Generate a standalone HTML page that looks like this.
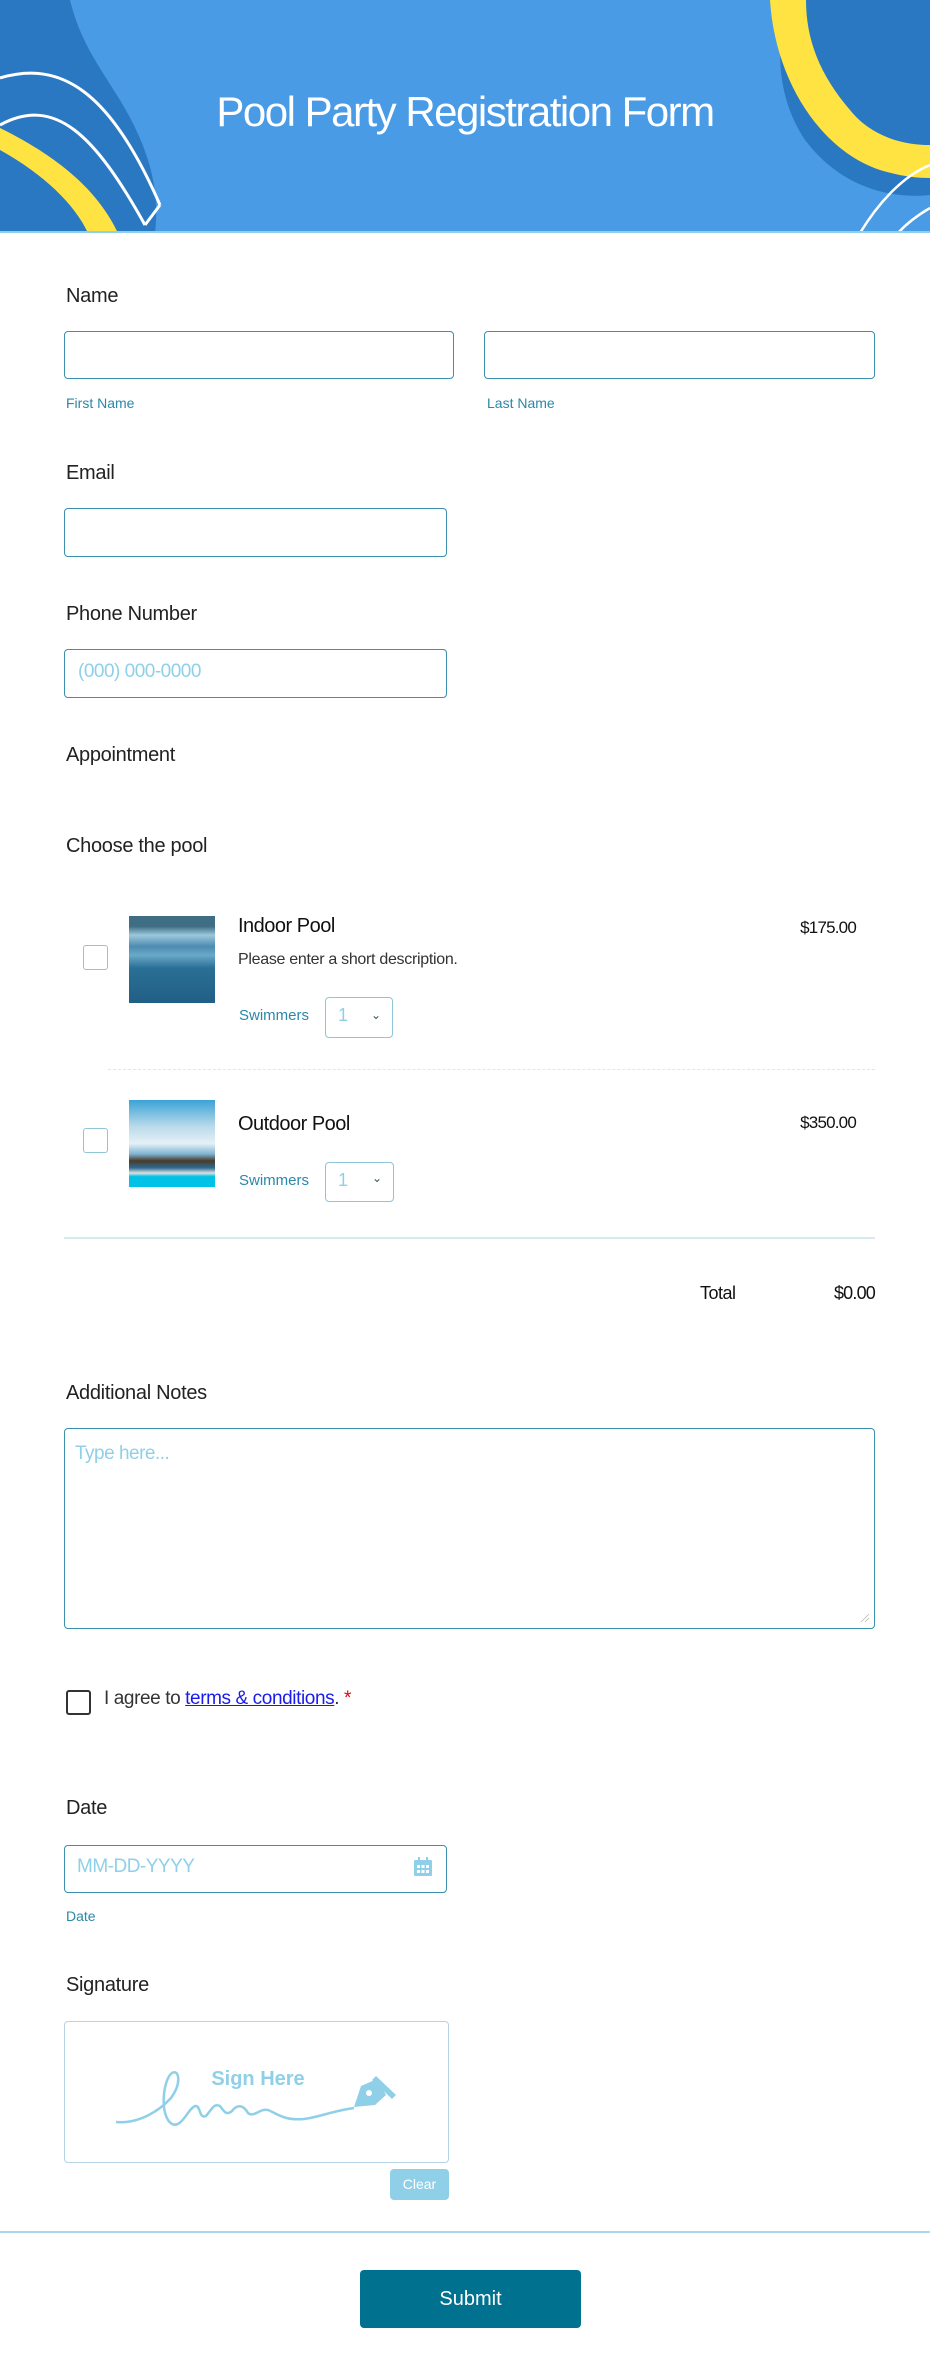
<!DOCTYPE html>
<html><head><meta charset="utf-8"><style>
*{box-sizing:border-box;margin:0;padding:0}
body{width:930px;height:2377px;position:relative;background:#fff;font-family:"Liberation Sans",sans-serif;color:#222;overflow:hidden}
.a{position:absolute}
.lbl{font-size:20px;color:#222;line-height:24px;letter-spacing:-0.3px}
.sub{font-size:14px;color:#2a88a8;line-height:18px}
.inp{border:1px solid #3a90ad;border-radius:4px;background:#fff}
.ph{font-size:19px;color:#8fd0e8;line-height:24px;letter-spacing:-0.5px}
.cb{border:1.5px solid #8ec5d8;border-radius:3px;background:#fff}
.sel{border:1px solid #8ec5d8;border-radius:4px}
.t{font-size:20px;color:#111;letter-spacing:-0.5px}
.pr{font-size:17px;color:#111;text-align:right;width:120px;letter-spacing:-0.8px}
</style></head><body>
<svg class="a" style="left:0;top:0" width="930" height="233" viewBox="0 0 930 233">
<rect width="930" height="233" fill="#4a9be5"/>
<path d="M0 0 H70 C80 40 95 60 120 100 C150 150 160 190 155 233 H0 Z" fill="#2a78c2"/>
<path d="M0 150 C45 175 75 205 88 233 H118 C100 195 65 160 0 128 Z" fill="#ffe342"/>
<path d="M0 78 C60 60 110 90 160 205" fill="none" stroke="#fff" stroke-width="3"/>
<path d="M0 125 C55 95 95 135 145 225" fill="none" stroke="#fff" stroke-width="3"/>
<path d="M145 225 L160 205" stroke="#fff" stroke-width="3"/>
<path d="M790 0 H930 V195 C880 200 835 180 805 140 C775 95 775 40 790 0 Z" fill="#2a78c2"/>
<path d="M770 0 C775 80 820 150 880 170 C900 176 915 178 930 178 V145 C900 145 870 135 850 110 C820 75 806 40 806 0 Z" fill="#ffe342"/>
<path d="M860 233 C880 200 905 175 930 165" fill="none" stroke="#fff" stroke-width="2.5"/>
<path d="M898 233 C908 222 918 215 930 208" fill="none" stroke="#fff" stroke-width="2.5"/>
<rect y="231" width="930" height="2" fill="#8fd0e8"/>
</svg>
<div class="a" style="left:0;width:930px;top:84px;text-align:center;color:#fff;font-size:42px;line-height:56px;letter-spacing:-1.5px">Pool Party Registration Form</div>

<div class="a lbl" style="left:66px;top:284px">Name</div>
<div class="a inp" style="left:64px;top:331px;width:390px;height:48px"></div>
<div class="a inp" style="left:484px;top:331px;width:391px;height:48px"></div>
<div class="a sub" style="left:66px;top:394px">First Name</div>
<div class="a sub" style="left:487px;top:394px">Last Name</div>

<div class="a lbl" style="left:66px;top:461px">Email</div>
<div class="a inp" style="left:64px;top:508px;width:383px;height:49px"></div>

<div class="a lbl" style="left:66px;top:602px">Phone Number</div>
<div class="a inp" style="left:64px;top:649px;width:383px;height:49px"></div>
<div class="a ph" style="left:78px;top:660px">(000) 000-0000</div>

<div class="a lbl" style="left:66px;top:743px">Appointment</div>
<div class="a lbl" style="left:66px;top:834px">Choose the pool</div>

<div class="a cb" style="left:83px;top:945px;width:25px;height:25px"></div>
<div class="a" style="left:129px;top:916px;width:86px;height:87px;background:linear-gradient(#3f6e84 0,#3f6e84 12%,#9cc8dc 22%,#4d8bb0 35%,#6aa9c8 45%,#2a6f95 60%,#215f86 100%)"></div>
<div class="a t" style="left:238px;top:915px">Indoor Pool</div>
<div class="a pr" style="left:736px;top:918px">$175.00</div>
<div class="a" style="left:238px;top:951px;font-size:16px;color:#333;letter-spacing:-0.3px">Please enter a short description.</div>
<div class="a sub" style="left:239px;top:1007px;font-size:15px">Swimmers</div>
<div class="a sel" style="left:325px;top:997px;width:68px;height:41px"></div>
<div class="a ph" style="left:338px;top:1003px;font-size:18px">1</div>
<div class="a" style="left:371px;top:1008px;font-size:12px;color:#355">&#8964;</div>

<div class="a" style="left:108px;top:1069px;width:767px;border-top:1px dashed #d6eaf2"></div>

<div class="a cb" style="left:83px;top:1128px;width:25px;height:25px"></div>
<div class="a" style="left:129px;top:1100px;width:86px;height:87px;background:linear-gradient(#3aa3d6 0,#b9d9ea 30%,#e6f0f6 50%,#7fb4d4 62%,#4a3a28 70%,#2c6c94 78%,#e0e0e0 84%,#00c2e6 88%,#00c2e6 100%)"></div>
<div class="a t" style="left:238px;top:1113px">Outdoor Pool</div>
<div class="a pr" style="left:736px;top:1113px">$350.00</div>
<div class="a sub" style="left:239px;top:1172px;font-size:15px">Swimmers</div>
<div class="a sel" style="left:325px;top:1162px;width:69px;height:40px"></div>
<div class="a ph" style="left:338px;top:1168px;font-size:18px">1</div>
<div class="a" style="left:372px;top:1171px;font-size:12px;color:#355">&#8964;</div>

<div class="a" style="left:64px;top:1237px;width:811px;height:2px;background:#d6eaf2"></div>
<div class="a" style="left:700px;top:1283px;font-size:18px;color:#111;letter-spacing:-0.5px">Total</div>
<div class="a pr" style="left:755px;top:1283px;font-size:18px">$0.00</div>

<div class="a lbl" style="left:66px;top:1381px">Additional Notes</div>
<div class="a inp" style="left:64px;top:1428px;width:811px;height:201px"></div>
<div class="a ph" style="left:75px;top:1442px">Type here...</div>
<div class="a" style="left:861px;top:1614px;width:8px;height:8px;background:linear-gradient(135deg,transparent 45%,#aaa 50%,transparent 55%,transparent 70%,#aaa 75%,transparent 80%)"></div>

<div class="a" style="left:66px;top:1690px;width:25px;height:25px;border:2px solid #333;border-radius:3px"></div>
<div class="a" style="left:104px;top:1688px;font-size:19px;color:#333;letter-spacing:-0.4px">I agree to <span style="color:#1a1aee;text-decoration:underline">terms &amp; conditions</span>. <span style="color:#e00">*</span></div>

<div class="a lbl" style="left:66px;top:1796px">Date</div>
<div class="a inp" style="left:64px;top:1845px;width:383px;height:48px"></div>
<div class="a ph" style="left:77px;top:1855px">MM-DD-YYYY</div>
<svg class="a" style="left:413px;top:1857px" width="20" height="20" viewBox="0 0 20 20"><rect x="1" y="3" width="18" height="16" rx="1" fill="#8fd0e8"/><rect x="5" y="0" width="2" height="4" fill="#8fd0e8"/><rect x="13" y="0" width="2" height="4" fill="#8fd0e8"/><g fill="#fff"><rect x="4" y="8" width="3" height="3"/><rect x="8.5" y="8" width="3" height="3"/><rect x="13" y="8" width="3" height="3"/><rect x="4" y="13" width="3" height="3"/><rect x="8.5" y="13" width="3" height="3"/><rect x="13" y="13" width="3" height="3"/></g></svg>
<div class="a sub" style="left:66px;top:1907px">Date</div>

<div class="a lbl" style="left:66px;top:1973px">Signature</div>
<div class="a" style="left:64px;top:2021px;width:385px;height:142px;border:1px solid #b7d3e6;border-radius:4px"></div>
<svg class="a" style="left:64px;top:2021px" width="385" height="142" viewBox="0 0 385 142">
<text x="194" y="64" text-anchor="middle" font-family="Liberation Sans,sans-serif" font-size="20" font-weight="bold" fill="#8fd0e8">Sign Here</text>
<path d="M52 101 C75 103 95 90 107 77 C118 62 115 48 108 52 C99 58 95 95 108 103 C118 108 125 85 132 85 C137 86 135 98 142 95 C148 88 150 82 156 85 C160 90 162 95 168 90 C174 82 180 85 184 92 C190 97 196 87 204 89 C212 92 220 100 240 98 C256 96 268 90 290 87" fill="none" stroke="#8fd0e8" stroke-width="2.5"/>
<path d="M290 86 L297 65 L313 58 L322 74 L311 84 Z" fill="#8fd0e8"/>
<circle cx="305" cy="72" r="3" fill="#fff"/>
<path d="M312 55 L332 74 L328 78 L308 59 Z" fill="#8fd0e8"/>
</svg>
<div class="a" style="left:390px;top:2169px;width:59px;height:31px;background:#8fd0e8;border-radius:4px;color:#fff;font-size:14px;text-align:center;line-height:31px">Clear</div>

<div class="a" style="left:0;top:2231px;width:930px;height:2px;background:#a8d8ee"></div>
<div class="a" style="left:360px;top:2270px;width:221px;height:58px;background:#00718e;border-radius:4px;color:#fff;font-size:20px;text-align:center;line-height:58px">Submit</div>
</body></html>
